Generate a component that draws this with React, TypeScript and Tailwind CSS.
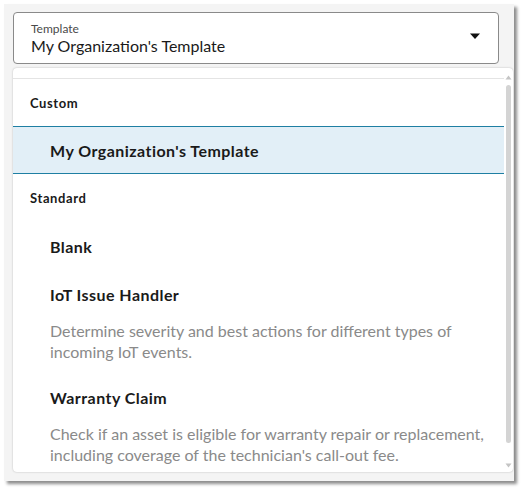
import React from "react";

const font = { fontFamily: "Lato, 'Open Sans', sans-serif" };

export default function App() {
  return (
    <div className="w-[525px] h-[489px] bg-white overflow-hidden" style={font}>
      <div className="ml-[4px] mt-[4px] w-[510px] h-[477px] bg-[#f4f4f4] shadow-[3px_3px_3px_rgba(0,0,0,0.45)] pl-[9px] pt-[8px]">
        <div className="w-[486px] h-[52px] bg-white border border-[#8a8a8a] rounded-[4px] flex items-center pl-[17px] pr-[16px]">
          <div className="flex-1 flex flex-col pt-[2px]">
            <span className="text-[12px] leading-[14px] text-[#4a4a4a]">Template</span>
            <span className="text-[16px] leading-[20px] text-[#1a1a1a]">My Organization's Template</span>
          </div>
          <svg width="12" height="8" viewBox="0 0 12 8" className="mr-[1px] mt-[-4px]">
            <path d="M1 1.5 L11 1.5 L6 7 Z" fill="#111" />
          </svg>
        </div>
        <div className="mt-[4px] w-[500px] h-[404px] bg-white rounded-[4px] shadow-[0_0_2px_rgba(0,0,0,0.25)] flex overflow-hidden">
          <div className="flex-1 flex flex-col pt-[10px]">
            <div className="h-[1px] bg-[#e4e4e4]" />
            <div className="h-[47px] flex items-center pt-[2px] pl-[17px] text-[13px] font-bold tracking-[0.6px] text-[#1a1a1a]">Custom</div>
            <div className="h-[48px] flex items-center pt-[1px] pl-[37px] border-y border-[#1f7fa3] bg-[#e2eff7] text-[16px] font-bold tracking-[0.45px] text-[#1a1a1a]">
              My Organization's Template
            </div>
            <div className="h-[48px] flex items-center pt-[2px] pl-[17px] text-[13px] font-bold tracking-[0.6px] text-[#1a1a1a]">Standard</div>
            <div className="h-[48px] flex items-center pt-[1px] pl-[37px] text-[16px] font-bold tracking-[0.45px] text-[#1a1a1a]">Blank</div>
            <div className="h-[48px] flex items-center pt-[1px] pl-[37px] text-[16px] font-bold tracking-[0.45px] text-[#1a1a1a]">IoT Issue Handler</div>
            <div className="mt-[2px] pl-[37px] pr-[20px] text-[16px] leading-[21px] text-[#8a8a8a]">
              Determine severity and best actions for different types of incoming IoT events.
            </div>
            <div className="mt-[11px] h-[48px] flex items-center pt-[1px] pl-[37px] text-[16px] font-bold tracking-[0.45px] text-[#1a1a1a]">Warranty Claim</div>
            <div className="mt-[2px] pl-[37px] pr-[10px] text-[16px] leading-[21px] text-[#8a8a8a]">
              Check if an asset is eligible for warranty repair or replacement, including coverage of the technician's call-out fee.
            </div>
          </div>
          <div className="w-[9px] flex flex-col items-center pt-[7px] pb-[4px]">
            <svg width="7" height="5" viewBox="0 0 7 5">
              <path d="M0.5 4.5 L3.5 0.5 L6.5 4.5 Z" fill="#c4c4c4" />
            </svg>
            <div className="mt-[5px] w-[5px] h-[358px] rounded-full bg-[#d4d4d4]" />
            <div className="flex-1" />
            <svg width="7" height="5" viewBox="0 0 7 5">
              <path d="M0.5 0.5 L6.5 0.5 L3.5 4.5 Z" fill="#c4c4c4" />
            </svg>
          </div>
        </div>
      </div>
    </div>
  );
}
